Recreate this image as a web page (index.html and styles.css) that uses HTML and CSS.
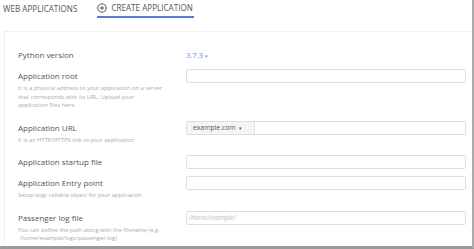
FILE: index.html
```html
<html lang="en">
<head>
  <meta charset="UTF-8" />
  <title>Create application</title>
  <link rel="stylesheet" href="styles.css">
</head>
<body>
  <div class="frame">
    <!-- Pestañas -->
    <div class="tabs">
      <span class="tab">Web Applications</span>
      <span class="tab active">
        <svg class="tab-icon" viewBox="0 0 10 10" width="10" height="10">
          <circle cx="5" cy="5" r="4.2" fill="none" stroke="#555" stroke-width="1"/>
          <path d="M5 2.8V7.2M2.8 5H7.2" stroke="#555" stroke-width="1"/>
        </svg>
        Create Application
      </span>
    </div>

    <!-- Formulario -->
    <div class="card">
      <div class="field">
        <div class="label">Python version</div>
        <div class="control"><span class="version">3.7.3 <span class="caret">&#9662;</span></span></div>
      </div>

      <div class="field has-desc">
        <div>
          <div class="label">Application root</div>
          <div class="desc">It is a physical address to your application on a server<br>that corresponds with its URL. Upload your<br>application files here.</div>
        </div>
        <div class="control"><div class="input"></div></div>
      </div>

      <div class="field has-desc">
        <div>
          <div class="label">Application URL</div>
          <div class="desc">It is an HTTP/HTTPS link to your application</div>
        </div>
        <div class="control">
          <div class="input group">
            <span class="addon">example.com <span class="caret">&#9662;</span></span>
          </div>
        </div>
      </div>

      <div class="field">
        <div class="label">Application startup file</div>
        <div class="control"><div class="input"></div></div>
      </div>

      <div class="field has-desc">
        <div>
          <div class="label">Application Entry point</div>
          <div class="desc">Setup wsgi callable object for your application</div>
        </div>
        <div class="control"><div class="input"></div></div>
      </div>

      <div class="field">
        <div>
          <div class="label">Passenger log file</div>
          <div class="desc">You can define the path along with the filename (e.g.<br>&nbsp;/home/example/logs/passenger.log)</div>
        </div>
        <div class="control"><div class="input"><span class="placeholder">/home/example/</span></div></div>
      </div>
    </div>
  </div>
</body>
</html>
```

FILE: styles.css
```css
/* General */
body {
  margin: 0;
  padding: 0;
  font-family: "Open Sans", Arial, sans-serif;
  color: #333;
  background: #fff;
}
.frame {
  box-sizing: border-box;
  width: 474px;
  height: 249px;
  overflow: hidden;
  border-right: 2px solid #aaa;
  border-bottom: 3px solid #999;
}
/* Pestañas */
.tabs {
  display: flex;
  height: 18px;
  padding-left: 3px;
}
.tab {
  font-size: 8.1px;
  text-transform: uppercase;
  color: #555;
  line-height: 16px;
  display: flex;
  align-items: center;
}
.tab.active {
  margin-left: 20px;
  border-bottom: 2px solid #5a78d8;
  height: 16px;
  padding-right: 1px;
}
.tab-icon {
  margin-right: 4px;
}
/* Tarjeta */
.card {
  margin: 13px 0 0 4px;
  border-top: 1px solid #f0f0f0;
  border-left: 1px solid #f0f0f0;
  padding: 16px 6px 0 13px;
}
.field {
  display: grid;
  grid-template-columns: 168px 280px;
  margin-bottom: 7px;
}
.field.has-desc {
  margin-bottom: 11px;
}
.label {
  font-size: 8px;
  line-height: 14px;
  height: 14px;
  color: #555;
}
.desc {
  font-size: 5.8px;
  line-height: 8.5px;
  color: #aaa;
  margin-top: 1px;
  white-space: nowrap;
}
.control {
  height: 14px;
  display: flex;
  align-items: center;
}
.version {
  font-size: 7.6px;
  color: #6b8fe0;
}
.caret {
  font-size: 5px;
}
.input {
  box-sizing: border-box;
  width: 280px;
  height: 14px;
  border: 1px solid #dedede;
  border-radius: 2px;
  display: flex;
  align-items: center;
}
.group {
  overflow: hidden;
}
.addon {
  box-sizing: border-box;
  width: 68px;
  height: 100%;
  background: #f5f5f5;
  border-right: 1px solid #e3e3e3;
  font-size: 6.8px;
  color: #555;
  padding-left: 6px;
  display: flex;
  align-items: center;
  gap: 3px;
}
.placeholder {
  font-size: 6.4px;
  font-style: italic;
  color: #bbb;
  padding-left: 2px;
}
```
